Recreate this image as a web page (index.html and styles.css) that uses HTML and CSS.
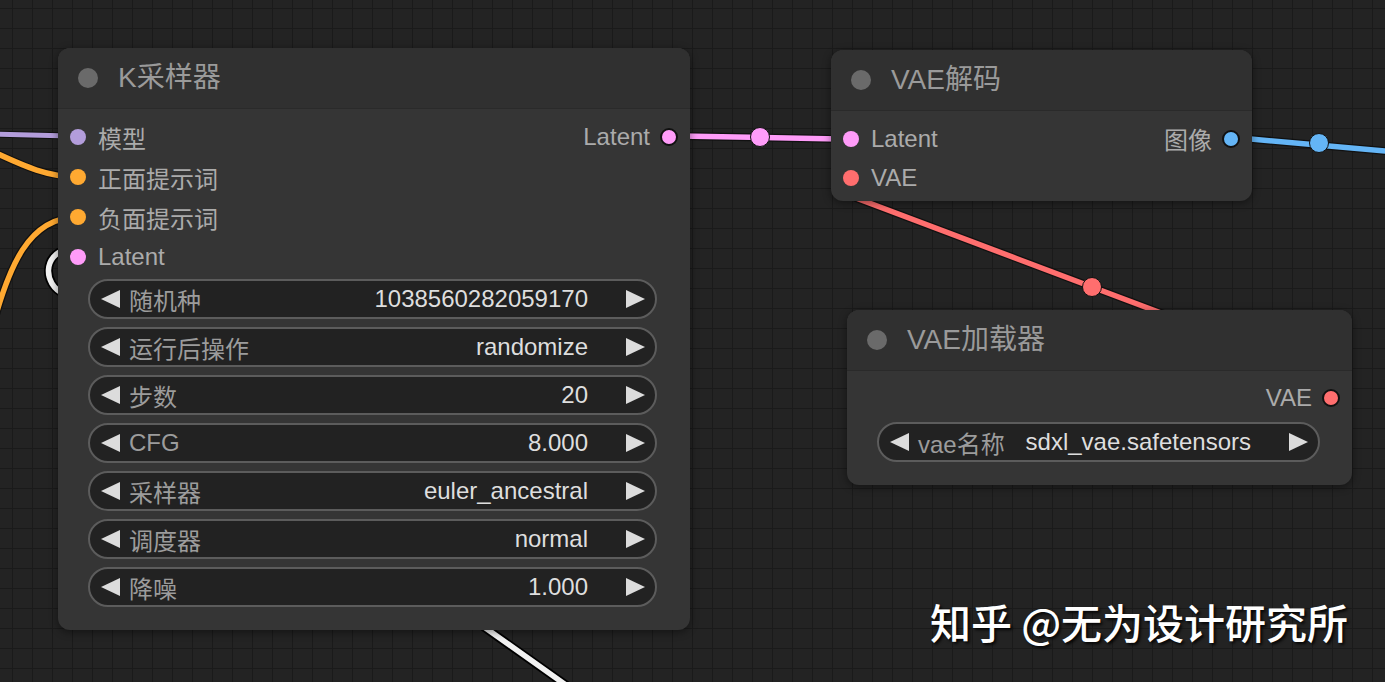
FILE: index.html
```html
<!DOCTYPE html>
<html lang="zh">
<head>
<meta charset="utf-8">
<title>ComfyUI</title>
<link rel="stylesheet" href="styles.css">
</head>
<body>
<div class="canvas">
  <svg class="links" width="1385" height="682" viewBox="0 0 1385 682">
    <g fill="none" stroke-linecap="round">
      <!-- purple model link -->
      <path d="M -10 134 L 70 136" stroke="#111" stroke-width="7"/>
      <path d="M -10 134 L 70 136" stroke="#b39ddb" stroke-width="5"/>
      <!-- orange positive -->
      <path d="M -60 130 C 0 150, 30 177, 78 177" stroke="#111" stroke-width="8"/>
      <path d="M -60 130 C 0 150, 30 177, 78 177" stroke="#ffa931" stroke-width="5.5"/>
      <!-- orange negative -->
      <path d="M -12 345 C 8 262, 30 217, 78 217" stroke="#111" stroke-width="8"/>
      <path d="M -12 345 C 8 262, 30 217, 78 217" stroke="#ffa931" stroke-width="5.5"/>
      <!-- white loop -->
      <path d="M 66 250 C 44 254, 42 284, 64 294" stroke="#000" stroke-width="9"/>
      <path d="M 66 250 C 44 254, 42 284, 64 294" stroke="#f2f2f2" stroke-width="5.5"/>
      <!-- white bottom -->
      <path d="M 470 617 L 580 695" stroke="#000" stroke-width="9"/>
      <path d="M 470 617 L 580 695" stroke="#f2f2f2" stroke-width="5.5"/>
      <!-- pink latent -->
      <path d="M 680 136 L 840 139" stroke="#111" stroke-width="8"/>
      <path d="M 680 136 L 840 139" stroke="#ff9cf9" stroke-width="5.5"/>
      <!-- blue image -->
      <path d="M 1240 138 L 1395 152" stroke="#111" stroke-width="8"/>
      <path d="M 1240 138 L 1395 152" stroke="#64b5f6" stroke-width="5.5"/>
      <!-- red vae -->
      <path d="M 840 192 L 1185 322" stroke="#111" stroke-width="8"/>
      <path d="M 840 192 L 1185 322" stroke="#ff6e6e" stroke-width="5.5"/>
    </g>
    <circle cx="760" cy="137" r="9.5" fill="#ff9cf9" stroke="#111" stroke-width="1"/>
    <circle cx="1319" cy="143" r="9.5" fill="#64b5f6" stroke="#111" stroke-width="1"/>
    <circle cx="1092" cy="287" r="9.5" fill="#ff6e6e" stroke="#111" stroke-width="1"/>
  </svg>

  <div class="node node-ksampler">
    <div class="node-title"><span class="title-dot"></span><span class="title-text">K采样器</span></div>
    <div class="node-body">
      <div class="slots">
        <div class="slot-col inputs">
          <div class="slot in"><span class="dot c-model"></span><span class="slot-label">模型</span></div>
          <div class="slot in"><span class="dot c-cond"></span><span class="slot-label">正面提示词</span></div>
          <div class="slot in"><span class="dot c-cond"></span><span class="slot-label">负面提示词</span></div>
          <div class="slot in"><span class="dot c-latent"></span><span class="slot-label">Latent</span></div>
        </div>
        <div class="slot-col outputs">
          <div class="slot out"><span class="slot-label">Latent</span><span class="dot c-latent ring"></span></div>
        </div>
      </div>
      <div class="widgets">
        <div class="widget"><svg class="arrow" viewBox="0 0 19 18"><path d="M0 9 L19 0 L19 18 Z"/></svg><span class="w-label">随机种</span><span class="w-value">1038560282059170</span><svg class="arrow" viewBox="0 0 19 18"><path d="M19 9 L0 0 L0 18 Z"/></svg></div>
        <div class="widget"><svg class="arrow" viewBox="0 0 19 18"><path d="M0 9 L19 0 L19 18 Z"/></svg><span class="w-label">运行后操作</span><span class="w-value">randomize</span><svg class="arrow" viewBox="0 0 19 18"><path d="M19 9 L0 0 L0 18 Z"/></svg></div>
        <div class="widget"><svg class="arrow" viewBox="0 0 19 18"><path d="M0 9 L19 0 L19 18 Z"/></svg><span class="w-label">步数</span><span class="w-value">20</span><svg class="arrow" viewBox="0 0 19 18"><path d="M19 9 L0 0 L0 18 Z"/></svg></div>
        <div class="widget"><svg class="arrow" viewBox="0 0 19 18"><path d="M0 9 L19 0 L19 18 Z"/></svg><span class="w-label">CFG</span><span class="w-value">8.000</span><svg class="arrow" viewBox="0 0 19 18"><path d="M19 9 L0 0 L0 18 Z"/></svg></div>
        <div class="widget"><svg class="arrow" viewBox="0 0 19 18"><path d="M0 9 L19 0 L19 18 Z"/></svg><span class="w-label">采样器</span><span class="w-value">euler_ancestral</span><svg class="arrow" viewBox="0 0 19 18"><path d="M19 9 L0 0 L0 18 Z"/></svg></div>
        <div class="widget"><svg class="arrow" viewBox="0 0 19 18"><path d="M0 9 L19 0 L19 18 Z"/></svg><span class="w-label">调度器</span><span class="w-value">normal</span><svg class="arrow" viewBox="0 0 19 18"><path d="M19 9 L0 0 L0 18 Z"/></svg></div>
        <div class="widget"><svg class="arrow" viewBox="0 0 19 18"><path d="M0 9 L19 0 L19 18 Z"/></svg><span class="w-label">降噪</span><span class="w-value">1.000</span><svg class="arrow" viewBox="0 0 19 18"><path d="M19 9 L0 0 L0 18 Z"/></svg></div>
      </div>
    </div>
  </div>

  <div class="node node-vaedecode">
    <div class="node-title"><span class="title-dot"></span><span class="title-text">VAE解码</span></div>
    <div class="node-body">
      <div class="slots">
        <div class="slot-col inputs">
          <div class="slot in tight"><span class="dot c-latent"></span><span class="slot-label">Latent</span></div>
          <div class="slot in tight"><span class="dot c-vae"></span><span class="slot-label">VAE</span></div>
        </div>
        <div class="slot-col outputs">
          <div class="slot out tight"><span class="slot-label">图像</span><span class="dot c-image ring"></span></div>
        </div>
      </div>
    </div>
  </div>

  <div class="node node-vaeloader">
    <div class="node-title"><span class="title-dot"></span><span class="title-text">VAE加载器</span></div>
    <div class="node-body">
      <div class="slots">
        <div class="slot-col inputs"></div>
        <div class="slot-col outputs">
          <div class="slot out"><span class="slot-label">VAE</span><span class="dot c-vae ring"></span></div>
        </div>
      </div>
      <div class="widgets">
        <div class="widget"><svg class="arrow" viewBox="0 0 19 18"><path d="M0 9 L19 0 L19 18 Z"/></svg><span class="w-label">vae名称</span><span class="w-value">sdxl_vae.safetensors</span><svg class="arrow" viewBox="0 0 19 18"><path d="M19 9 L0 0 L0 18 Z"/></svg></div>
      </div>
    </div>
  </div>

  <div class="watermark">知乎 @无为设计研究所</div>
</div>
</body>
</html>
```

FILE: styles.css
```css
html, body {
  margin: 0;
  padding: 0;
  width: 1385px;
  height: 682px;
  overflow: hidden;
  background: #232323;
}

.canvas {
  position: relative;
  width: 1385px;
  height: 682px;
  overflow: hidden;
  font-family: "Liberation Sans", "Noto Sans CJK SC", sans-serif;
  background-color: #232323;
  background-image:
    linear-gradient(to right, #1a1a1a 0, #1a1a1a 1px, transparent 1px),
    linear-gradient(to bottom, #1a1a1a 0, #1a1a1a 1px, transparent 1px);
  background-size: 20px 20px;
  background-position: 12px 8px;
}

.links {
  position: absolute;
  left: 0;
  top: 0;
}

.node {
  position: absolute;
  background: #353535;
  border-radius: 12px;
  box-shadow: 0 2px 8px rgba(0, 0, 0, 0.45);
  overflow: hidden;
}

.node-ksampler { left: 58px; top: 48px; width: 632px; height: 582px; }
.node-vaedecode { left: 831px; top: 50px; width: 421px; height: 151px; }
.node-vaeloader { left: 847px; top: 310px; width: 505px; height: 175px; }

.node-title {
  height: 60px;
  display: flex;
  align-items: center;
  background: #303030;
  border-bottom: 1px solid #2a2a2a;
  padding-left: 20px;
}

.title-dot {
  width: 20px;
  height: 20px;
  border-radius: 50%;
  background: #6a6a6a;
  flex: none;
}

.title-text {
  margin-left: 20px;
  font-size: 28px;
  color: #9a9a9a;
  line-height: 1;
}

.node-body {
  display: flex;
  flex-direction: column;
}

.node-ksampler .node-body { padding-top: 8px; }
.node-vaedecode .node-body { padding-top: 8px; }
.node-vaeloader .node-body { padding-top: 7px; }

.slots {
  display: flex;
  justify-content: space-between;
}

.slot-col {
  display: flex;
  flex-direction: column;
}

.slot {
  height: 40px;
  display: flex;
  align-items: center;
  font-size: 24px;
  color: #ababab;
}

.slot.tight { height: 39px; }

.slot.in { padding-left: 12px; }
.slot.in .slot-label { margin-left: 12px; }

.slot.out { padding-right: 12px; justify-content: flex-end; }
.slot.out .slot-label { margin-right: 10px; }

.dot {
  width: 16px;
  height: 16px;
  border-radius: 50%;
  flex: none;
  box-sizing: border-box;
}

.dot.ring {
  width: 18px;
  height: 18px;
  border: 2px solid #111;
}

.c-model { background: #b39ddb; }
.c-cond { background: #ffa931; }
.c-latent { background: #ff9cf9; }
.c-vae { background: #ff6e6e; }
.c-image { background: #64b5f6; }

.widgets {
  display: flex;
  flex-direction: column;
  gap: 8px;
  padding: 0 33px 0 30px;
  margin-top: 2px;
}

.node-vaeloader .widgets { margin-top: 4px; padding: 0 32px 0 30px; }

.widget {
  height: 40px;
  box-sizing: border-box;
  border: 2px solid #5c5c5c;
  border-radius: 20px;
  background: #222222;
  display: flex;
  align-items: center;
  padding: 0 10px 0 11px;
  font-size: 24px;
}

.arrow {
  width: 19px;
  height: 18px;
  flex: none;
  fill: #dcdcdc;
}

.w-label {
  margin-left: 9px;
  color: #9c9c9c;
  white-space: nowrap;
}

.w-value {
  margin-left: auto;
  margin-right: 38px;
  color: #dedede;
  white-space: nowrap;
}

.watermark {
  position: absolute;
  left: 930px;
  top: 595px;
  font-family: "Noto Sans CJK SC", sans-serif;
  font-size: 41px;
  font-weight: 500;
  line-height: 52px;
  color: #ffffff;
  text-shadow: 2px 2px 3px rgba(0, 0, 0, 0.85);
  white-space: nowrap;
}
```
